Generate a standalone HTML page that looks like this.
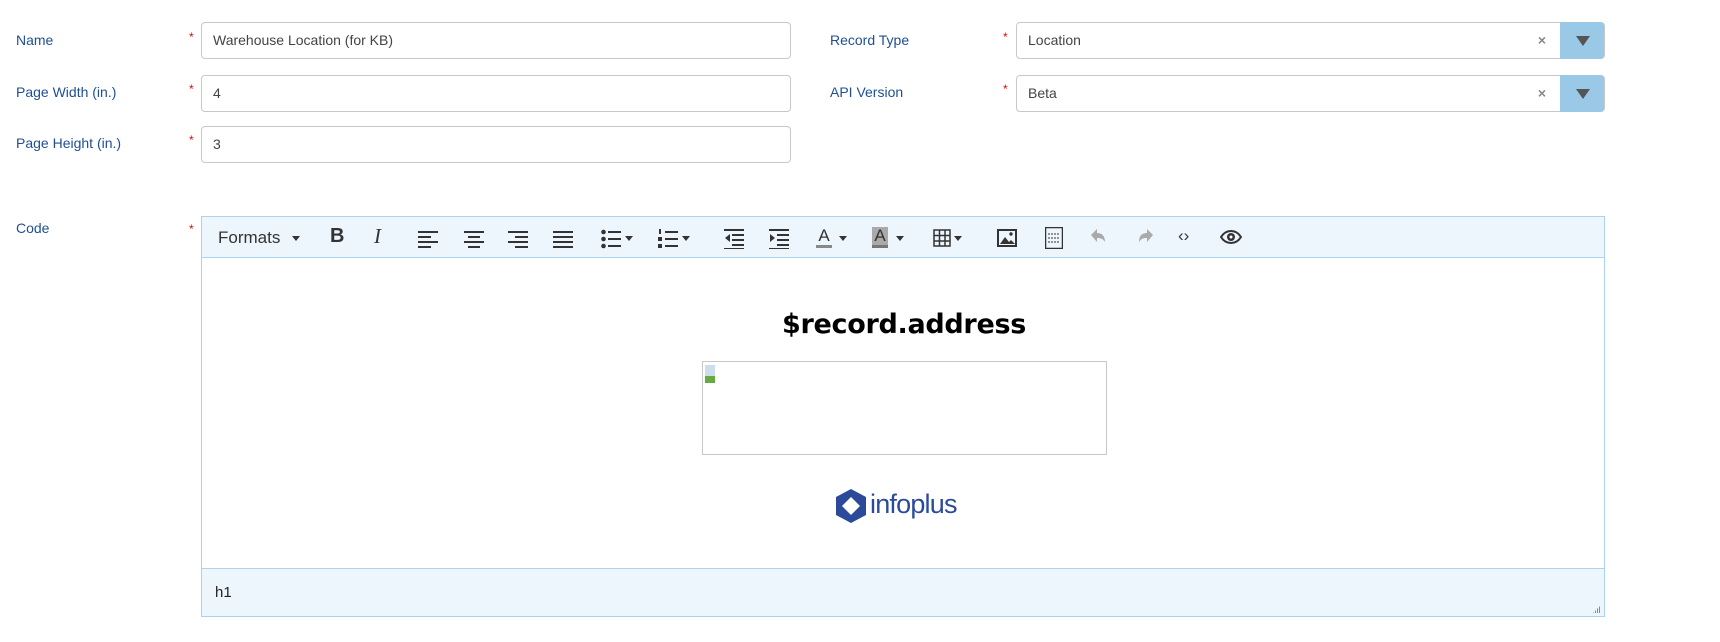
<!DOCTYPE html>
<html><head><meta charset="utf-8"><style>
*{box-sizing:border-box;margin:0;padding:0}
body{width:1720px;height:642px;background:#fff;font-family:"Liberation Sans",Arial,sans-serif;position:relative;overflow:hidden}
.lbl{position:absolute;color:#1f4f93;font-size:14px}
.ast{position:absolute;color:#e00;font-size:12px;left:189px}
.inp{position:absolute;border:1px solid #c8c8c8;border-radius:4px;background:#fff;font-size:14px;color:#444;padding-left:11px;line-height:35px;height:37px}
.dd{position:absolute;right:0;top:-1px;width:44px;height:37px;background:#9ac8e7;border-radius:0 4px 4px 0}
.dd:after{content:"";position:absolute;left:16px;top:14px;border-left:7px solid transparent;border-right:7px solid transparent;border-top:10px solid #555}
.x{position:absolute;right:58px;top:0;color:#888;font-size:14px;font-weight:bold}
.ed{position:absolute;left:201px;top:216px;width:1404px;height:401px;border:1px solid #a9d3ef}
.tb{position:absolute;left:0;top:0;width:100%;height:41px;background:#edf5fd;border-bottom:1px solid #a9d3ef}
.sb{position:absolute;left:0;bottom:0;width:100%;height:48px;background:#edf5fd;border-top:1px solid #a9d3ef;font-size:15px;color:#222;padding:15px 0 0 13px}
.ic{position:absolute;top:11px}
.car{position:absolute;top:19px;border-left:4px solid transparent;border-right:4px solid transparent;border-top:5px solid #333}
</style></head><body>
<div class="lbl" style="left:16px;top:32px">Name</div>
<div class="lbl" style="left:16px;top:84px">Page Width (in.)</div>
<div class="lbl" style="left:16px;top:135px">Page Height (in.)</div>
<div class="lbl" style="left:16px;top:220px">Code</div>
<div class="ast" style="top:30px">*</div>
<div class="ast" style="top:82px">*</div>
<div class="ast" style="top:133px">*</div>
<div class="ast" style="top:222px">*</div>
<div class="inp" style="left:201px;top:22px;width:590px">Warehouse Location (for KB)</div>
<div class="inp" style="left:201px;top:75px;width:590px">4</div>
<div class="inp" style="left:201px;top:126px;width:590px">3</div>
<div class="lbl" style="left:830px;top:32px">Record Type</div>
<div class="lbl" style="left:830px;top:84px">API Version</div>
<div class="ast" style="left:1003px;top:30px">*</div>
<div class="ast" style="left:1003px;top:82px">*</div>
<div class="inp" style="left:1016px;top:22px;width:589px">Location<span class="x">×</span><span class="dd"></span></div>
<div class="inp" style="left:1016px;top:75px;width:589px">Beta<span class="x">×</span><span class="dd"></span></div>

<div class="ed">
 <div class="tb">
  <div style="position:absolute;left:16px;top:11px;font-size:17px;color:#333">Formats</div><div class="car" style="left:90px"></div>
  <div class="ic" style="left:128px;font-size:20px;font-weight:bold;color:#333;top:8px">B</div>
  <div class="ic" style="left:172px;font-size:21px;font-style:italic;color:#333;top:7px;font-family:'Liberation Serif',serif">I</div>
  <svg class="ic" style="left:216px;top:12px" width="380" height="20" viewBox="0 0 380 20" fill="#333">
   <g><rect x="0" y="2" width="20" height="2"/><rect x="0" y="7" width="13" height="2"/><rect x="0" y="12" width="20" height="2"/><rect x="0" y="17" width="13" height="2"/></g>
   <g transform="translate(46 0)"><rect x="0" y="2" width="20" height="2"/><rect x="4" y="7" width="12" height="2"/><rect x="0" y="12" width="20" height="2"/><rect x="4" y="17" width="12" height="2"/></g>
   <g transform="translate(90 0)"><rect x="0" y="2" width="20" height="2"/><rect x="7" y="7" width="13" height="2"/><rect x="0" y="12" width="20" height="2"/><rect x="7" y="17" width="13" height="2"/></g>
   <g transform="translate(135 0)"><rect x="0" y="2" width="20" height="2"/><rect x="0" y="7" width="20" height="2"/><rect x="0" y="12" width="20" height="2"/><rect x="0" y="17" width="20" height="2"/></g>
   <g transform="translate(183 0)"><circle cx="2.5" cy="3" r="2.3"/><circle cx="2.5" cy="10" r="2.3"/><circle cx="2.5" cy="17" r="2.3"/><rect x="7" y="2" width="13" height="2"/><rect x="7" y="9" width="13" height="2"/><rect x="7" y="16" width="13" height="2"/></g>
   <g transform="translate(240 0)"><rect x="1" y="0" width="2" height="5"/><rect x="0" y="8" width="4" height="4"/><rect x="0" y="15" width="4" height="4"/><rect x="7" y="2" width="13" height="2"/><rect x="7" y="9" width="13" height="2"/><rect x="7" y="16" width="13" height="2"/></g>
   <g transform="translate(306 0)"><rect x="0" y="0" width="20" height="2"/><rect x="8" y="5" width="12" height="2"/><rect x="8" y="10" width="12" height="2"/><rect x="8" y="15" width="12" height="2"/><rect x="0" y="19" width="20" height="1"/><path d="M6 5v8l-5-4z"/></g>
   <g transform="translate(351 0)"><rect x="0" y="0" width="20" height="2"/><rect x="8" y="5" width="12" height="2"/><rect x="8" y="10" width="12" height="2"/><rect x="8" y="15" width="12" height="2"/><rect x="0" y="19" width="20" height="1"/><path d="M1 5v8l5-4z"/></g>
  </svg>
  <div class="car" style="left:423px"></div>
  <div class="car" style="left:480px"></div>
  <div class="ic" style="left:614px;top:10px;font-size:17px;color:#333;border-bottom:3px solid #888;line-height:18px;width:16px;text-align:center">A</div><div class="car" style="left:637px"></div>
  <div class="ic" style="left:670px;top:10px;font-size:17px;color:#333;background:#aaa;border-bottom:3px solid #777;line-height:18px;width:16px;text-align:center">A</div><div class="car" style="left:694px"></div>
  <svg class="ic" style="left:731px;top:12px" width="18" height="18" fill="none" stroke="#333" stroke-width="1.5"><rect x="1" y="1" width="16" height="16"/><path d="M1 6.5h16M1 12h16M6.5 1v16M12 1v16"/></svg><div class="car" style="left:752px"></div>
  <svg class="ic" style="left:795px;top:12px" width="20" height="18"><rect x="1" y="1" width="18" height="16" fill="none" stroke="#333" stroke-width="2"/><path d="M3 15l5-7 4 5 2-2 4 4z" fill="#333"/><circle cx="14" cy="5" r="1.7" fill="#333"/></svg>
  <svg class="ic" style="left:843px;top:10px" width="18" height="22" fill="none" stroke="#333"><rect x="0.5" y="0.5" width="17" height="21" stroke-width="1.5"/><path d="M3 7h12M3 11h12M3 15h12" stroke-dasharray="2 1"/></svg>
  <svg class="ic" style="left:888px;top:12px" width="16" height="18" fill="#aaa"><path d="M1 6l6-6v4c5 0 8 3 8 9-2-3-4-4-8-4v4z"/></svg>
  <svg class="ic" style="left:936px;top:12px" width="16" height="18" fill="#aaa"><path d="M15 6l-6-6v4c-5 0-8 3-8 9 2-3 4-4 8-4v4z"/></svg>
  <div class="ic" style="left:976px;top:9px;font-size:17px;color:#333">‹›</div>
  <svg class="ic" style="left:1018px;top:12px" width="22" height="16"><path d="M1 8c5-8 15-8 20 0-5 8-15 8-20 0z" fill="none" stroke="#333" stroke-width="2"/><circle cx="11" cy="8" r="4" fill="#333"/><circle cx="11" cy="8" r="1.5" fill="#fff"/></svg>
 </div>
 <div style="position:absolute;left:0;top:92px;width:1404px;text-align:center;font-family:'DejaVu Sans',sans-serif;font-weight:bold;font-size:27px;color:#000;letter-spacing:-0.3px">$record.address</div>
 <div style="position:absolute;left:500px;top:144px;width:405px;height:94px;border:1px solid #c8c8c8"><div style="position:absolute;left:2px;top:3px;width:10px;height:18px;background:linear-gradient(#cde 60%,#6a4 60%)"></div></div>
 <div style="position:absolute;left:633px;top:271px;height:36px">
  <svg width="32" height="36" style="position:absolute;left:0;top:0"><path d="M16 1l15 8v18l-15 8-15-8v-18z" fill="#2b4a9a"/><path d="M16 9l9 9-9 9-9-9z" fill="#fff"/></svg>
  <span style="position:absolute;left:35px;top:1px;font-size:27px;color:#2b4a9a;letter-spacing:-0.8px">infoplus</span>
 </div>
 <div class="sb">h1</div>
 <div style="position:absolute;right:3px;bottom:3px;width:8px;height:8px;background:repeating-linear-gradient(90deg,#888 0 1px,transparent 1px 2px);clip-path:polygon(100% 0,100% 100%,0 100%)"></div>
</div>
</body></html>
